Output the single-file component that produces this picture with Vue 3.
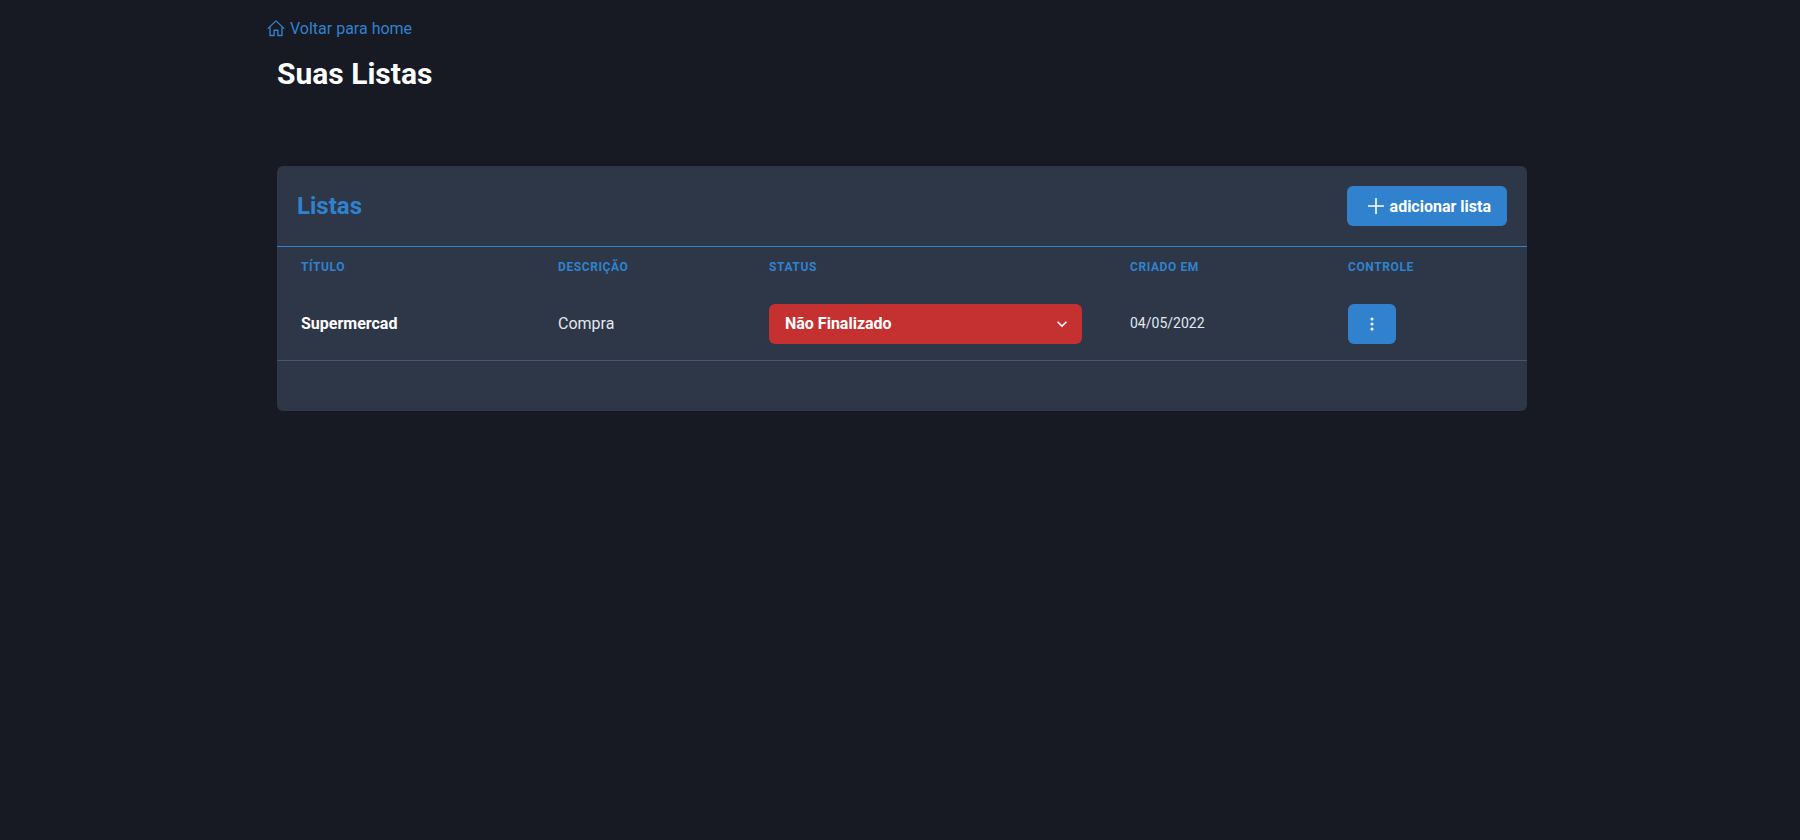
<script setup>
const columns = ['Título', 'Descrição', 'Status', 'Criado em', 'Controle']
</script>

<template>
  <div class="page">
    <a class="back" href="#">
      <svg class="home" viewBox="0 0 24 24" fill="none" stroke="currentColor" stroke-width="1.8" stroke-linejoin="round" stroke-linecap="round">
        <path d="M1.5 12.5 12 2.5l10.5 10" />
        <path d="M4 10.5V22h5.5v-7h5v7H20V10.5" />
      </svg>
      Voltar para home
    </a>
    <h1 class="title">Suas Listas</h1>

    <section class="card">
      <header class="card-head">
        <h2>Listas</h2>
        <button class="add" type="button">
          <svg class="plus" viewBox="0 0 16 16" fill="none" stroke="currentColor" stroke-width="1.6">
            <path d="M8 0v16M0 8h16" />
          </svg>
          adicionar lista
        </button>
      </header>

      <div class="grid heads">
        <div v-for="c in columns" :key="c" class="th">{{ c }}</div>
      </div>

      <div class="grid row">
        <div class="cell text name">Supermercad</div>
        <div class="cell text desc">Compra</div>
        <div class="cell">
          <div class="select-wrap">
            <select class="status">
              <option>Não Finalizado</option>
              <option>Finalizado</option>
            </select>
            <svg class="chev" viewBox="0 0 24 24" fill="currentColor">
              <path d="M16.59 8.59L12 13.17 7.41 8.59 6 10l6 6 6-6z" />
            </svg>
          </div>
        </div>
        <div class="cell text date">04/05/2022</div>
        <div class="cell">
          <button class="more" type="button" aria-label="Controle">
            <svg viewBox="0 0 16 16" fill="currentColor" width="16" height="16">
              <circle cx="8" cy="3" r="1.5" />
              <circle cx="8" cy="8" r="1.5" />
              <circle cx="8" cy="13" r="1.5" />
            </svg>
          </button>
        </div>
      </div>
    </section>
  </div>
</template>

<style>
html, body { margin: 0; background: #171923; }
</style>

<style scoped>
* { box-sizing: border-box; }
.page {
  min-height: 840px;
  background: #171923;
  padding: 17px 0 0 268px;
  font-family: Roboto, "Liberation Sans", sans-serif;
  color: #fff;
}
.back {
  display: flex;
  align-items: center;
  gap: 5px;
  height: 24px;
  color: #3182ce;
  font-size: 16px;
  line-height: 24px;
  text-decoration: none;
}
.home { width: 18px; height: 18px; margin: -2px 0 0 -1px; }
.title {
  margin: 15px 0 0 9px;
  font-size: 30px;
  line-height: 36px;
  font-weight: 700;
}
.card {
  width: 1250px;
  margin: 74px 0 0 9px;
  background: #2d3748;
  border-radius: 6px;
  padding-bottom: 50px;
}
.card-head {
  height: 81px;
  padding: 20px;
  display: flex;
  align-items: center;
  justify-content: space-between;
  border-bottom: 1px solid #3182ce;
}
.card-head h2 {
  margin: 0;
  font-size: 24px;
  line-height: 32px;
  font-weight: 700;
  color: #3182ce;
}
.add {
  display: flex;
  align-items: center;
  gap: 6px;
  height: 40px;
  padding: 0 16px 0 21px;
  border: 0;
  border-radius: 6px;
  background: #3182ce;
  color: #fff;
  font: 700 16px Roboto, sans-serif;
}
.plus { width: 16px; height: 16px; }
.grid {
  display: grid;
  grid-template-columns: 257px 211px 361px 218px 203px;
}
.th {
  padding: 12px 24px;
  font-size: 12px;
  line-height: 16px;
  font-weight: 700;
  letter-spacing: 0.05em;
  text-transform: uppercase;
  color: #3182ce;
}
.row {
  height: 74px;
  padding-top: 1px;
  border-bottom: 1px solid #4a5568;
  align-items: center;
}
.cell {
  padding: 0 24px;
  font-size: 16px;
  color: #e2e8f0;
}
.text { padding-bottom: 2px; }
.name { font-weight: 700; color: #fff; }
.date { font-size: 14px; }
.select-wrap { position: relative; width: 313px; height: 40px; }
.status {
  appearance: none;
  display: block;
  width: 100%;
  height: 40px;
  padding: 0 32px 2px 16px;
  border: 0;
  border-radius: 6px;
  background: #c53030;
  color: #fff;
  font: 700 16px Roboto, sans-serif;
}
.chev {
  position: absolute;
  right: 10px;
  top: 10px;
  width: 20px;
  height: 20px;
  color: #fff;
  pointer-events: none;
}
.more {
  display: flex;
  align-items: center;
  justify-content: center;
  width: 48px;
  height: 40px;
  padding: 0;
  border: 0;
  border-radius: 6px;
  background: #3182ce;
  color: #fff;
}
</style>
